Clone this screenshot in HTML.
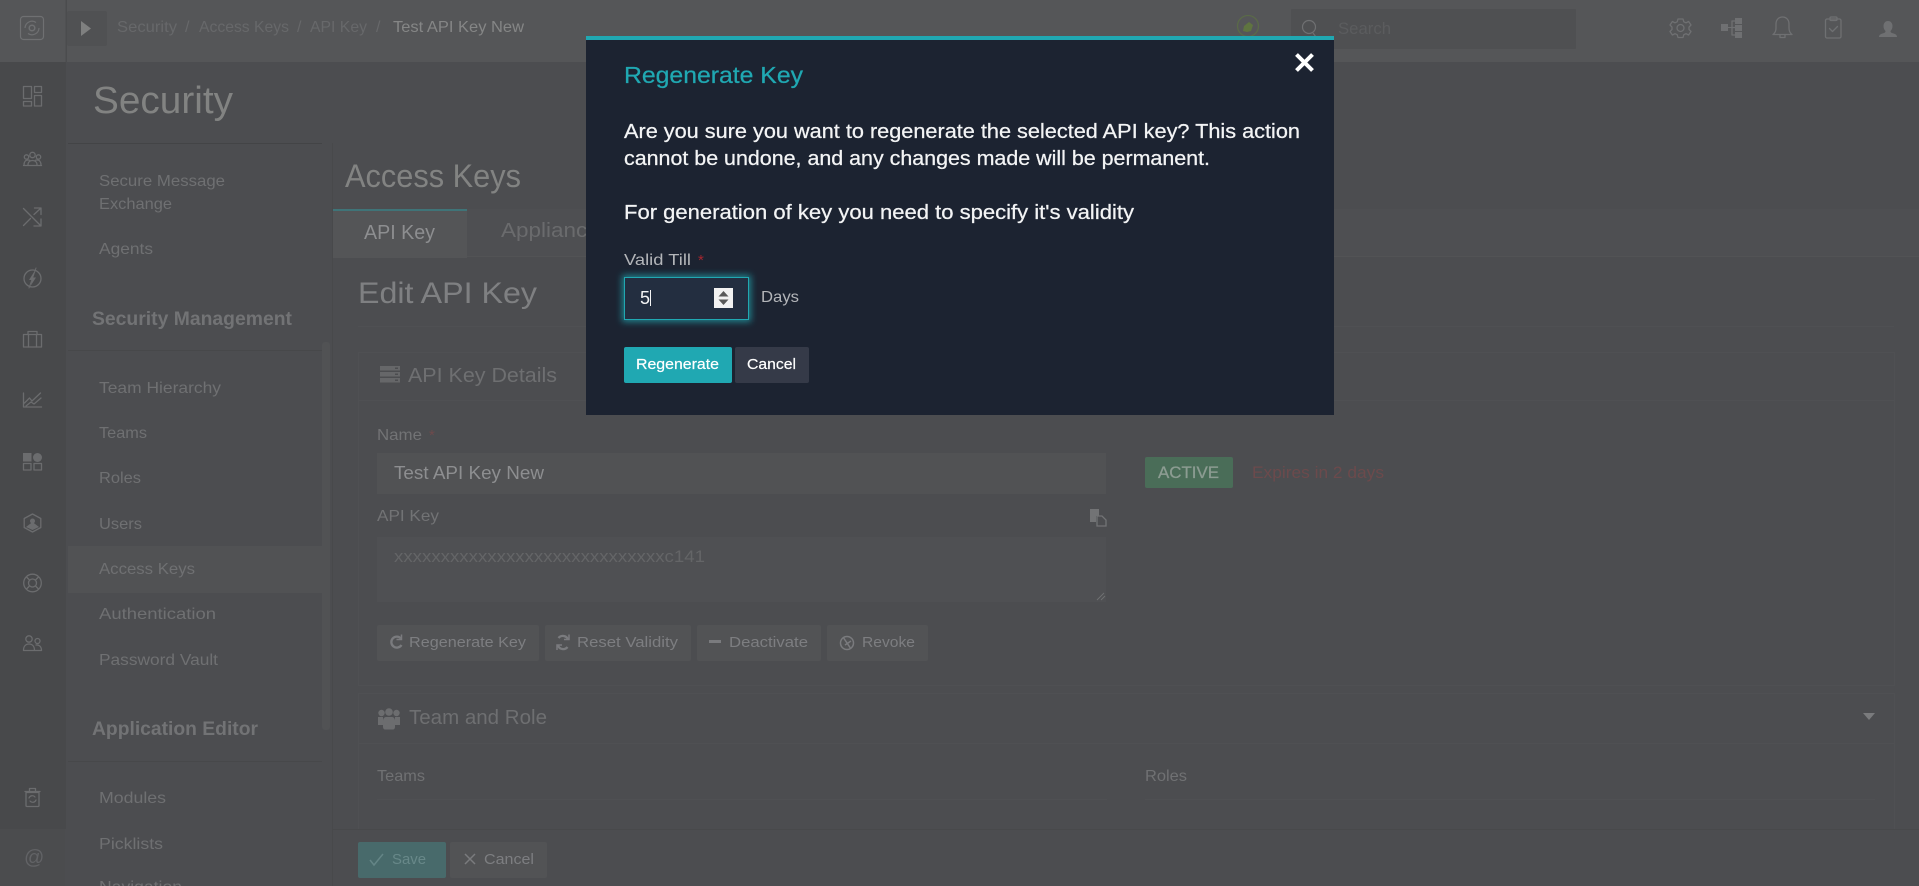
<!DOCTYPE html>
<html lang="en"><head><meta charset="utf-8"><title>Regenerate Key</title>
<style>
html,body{margin:0;padding:0;background:#4c4d50;width:1919px;height:886px;overflow:hidden}
svg{display:block}
text{font-family:"Liberation Sans",sans-serif;white-space:pre}
.ic{fill:none;stroke:#6b6c6e;stroke-width:1.300;stroke-linecap:round;stroke-linejoin:round}
.f{fill:#6b6c6e;stroke:none}
</style></head><body>
<svg xmlns="http://www.w3.org/2000/svg" width="1919" height="886" viewBox="0 0 1919 886">
<defs><filter id="glow" x="-30%" y="-50%" width="160%" height="200%"><feGaussianBlur stdDeviation="3.500"/></filter></defs>
<!-- base -->
<rect width="1919" height="886" fill="#4c4d50"/>
<rect x="0" y="0" width="1919" height="62" fill="#555658"/>
<rect x="0" y="62" width="66" height="767" fill="#48494b"/>
<rect x="0" y="829" width="65" height="57" fill="#4b4c4e"/>
<rect x="65.500" y="0" width="1.500" height="62" fill="#4b4c4e"/>
<rect x="67" y="11" width="40" height="35" rx="2" fill="#505153"/>
<path d="M81 21L91 28.500L81 36Z" fill="#7f8080"/>
<!-- logo -->
<rect x="20.500" y="16.500" width="23" height="23" rx="3" fill="none" stroke="#6f7072" stroke-width="1.200"/>
<path d="M25 28a7 7 0 0 1 11-5.500M39 28a7 7 0 0 1-11 5.500" fill="none" stroke="#6f7072" stroke-width="1.200"/>
<circle cx="32" cy="28" r="2.800" fill="none" stroke="#6f7072" stroke-width="1.500"/>
<!-- breadcrumb -->
<g font-size="16" fill="#67686a">
<text x="117" y="32" textLength="60" lengthAdjust="spacingAndGlyphs">Security</text>
<text x="185" y="32">/</text>
<text x="199" y="32" textLength="90" lengthAdjust="spacingAndGlyphs">Access Keys</text>
<text x="297" y="32">/</text>
<text x="310" y="32" textLength="57" lengthAdjust="spacingAndGlyphs">API Key</text>
<text x="376" y="32">/</text>
<text x="393" y="32" textLength="131" lengthAdjust="spacingAndGlyphs" fill="#858686">Test API Key New</text>
</g>
<!-- plug status -->
<circle cx="1248" cy="26" r="10.500" fill="none" stroke="#5a6a48" stroke-width="1.300"/>
<path d="M1243 31l1-5 5-4 4 3-2 6-4 1z" fill="#5f7440"/>
<!-- search -->
<rect x="1291" y="9" width="285" height="40" rx="1" fill="#4f5052"/>
<circle cx="1309" cy="27" r="6.500" fill="none" stroke="#6f7072" stroke-width="1.200"/>
<path d="M1313 33l3 4" stroke="#6f7072" stroke-width="1.200"/>
<text x="1338" y="34" font-size="17" fill="#5b5c5e" textLength="53" lengthAdjust="spacingAndGlyphs">Search</text>
<!-- top right icons -->
<g class="ic" style="stroke:#6f7072">
<path d="M1678 19h5l.8 2.800 2.200 1 2.600-1.300 2.400 3.500-2 2.100v2.300l2 2.100-2.400 3.500-2.600-1.300-2.200 1-.8 2.800h-5l-.8-2.800-2.200-1-2.600 1.300-2.400-3.500 2-2.100v-2.300l-2-2.100 2.400-3.500 2.600 1.300 2.200-1z"/>
<circle cx="1680.500" cy="28" r="3.500"/>
<path d="M1732 27.500h4M1732 21v14h4M1732 21h4"/>
<path d="M1782.500 17c-4 0-6.500 3-6.500 7v4c0 3-1 5-3 6.500h19c-2-1.500-3-3.500-3-6.500v-4c0-4-2.500-7-6.500-7zM1780 35v2.500h5V35"/>
<rect x="1825.500" y="19" width="15.500" height="19" rx="1.500"/>
<rect x="1830" y="17" width="7" height="3.500" rx="1"/>
<path d="M1829.500 28.500l3 3 5-5"/>
</g>
<g fill="#6f7072">
<rect x="1721" y="24" width="7" height="7"/><rect x="1735" y="18" width="7" height="6"/><rect x="1735" y="25" width="7" height="6"/><rect x="1735" y="32" width="7" height="6"/>
<path d="M1728 27.500h4" stroke="#6f7072"/>
<path d="M1888 21c-3 0-4.500 2.500-4.500 5 0 2.500 1 4 2 5 0 1.500-1 2-3 2.500-2 .6-3.500 1.500-3.500 3.500h18c0-2-1.500-3-3.500-3.500-2-.5-3-1-3-2.500 1-1 2-2.500 2-5 0-2.500-1.500-5-4.500-5z"/>
</g>
<!-- rail icons -->
<g class="ic">
<rect x="23.500" y="86.500" width="8" height="12"/><rect x="34.500" y="86.500" width="7" height="6"/><rect x="23.500" y="101.500" width="8" height="4.500"/><rect x="34.500" y="95.500" width="7" height="10.500"/>
<circle cx="32.500" cy="155" r="2.700"/><circle cx="26.500" cy="157" r="2.200"/><circle cx="38.500" cy="157" r="2.200"/><path d="M23.500 165.500h18M24 165c0-3 1.500-5 4-5 .8 0 1.500.2 2 .6M41 165c0-3-1.500-5-4-5-.8 0-1.500.2-2 .6M28 165c0-3 2-4.500 4.500-4.500S37 162 37 165"/>
<path d="M23.500 208.500l17 17M23.500 225.500l7-7M34 214.500l6.500-6M34.500 208h6.500v6.500M41 219v7h-7"/>
<circle cx="32.500" cy="278.500" r="8.500"/><path d="M36 268l-7 20" stroke-width="1"/><path class="f" d="M34 272l-5 8h3l-1.500 6 5.500-8.500h-3l2-5.500z"/>
<rect x="23.500" y="334.500" width="18" height="12.500"/><path d="M28 334.500v-3h9v3M28.500 334.500v12.500M36.500 334.500v12.500"/>
<path d="M23.500 393v14h18M24.500 403l5-5 2.500 3 8.500-8M26 406l5-4 3 2 7-6"/>
<rect class="f" x="23" y="453" width="8.500" height="8.500"/><circle class="f" cx="37.500" cy="457.500" r="4.500"/><rect x="23.500" y="463.500" width="7.500" height="6.500"/><rect x="34" y="463.500" width="7.500" height="6.500"/>
<path d="M32.500 514l8.300 4.500v9L32.500 532l-8.300-4.500v-9z"/><circle class="f" cx="32.500" cy="521" r="2.500"/><path class="f" d="M26 527l6.500-5 6.500 5-6.500 3z"/>
<circle cx="32.500" cy="583" r="8.800"/><circle cx="32.500" cy="583" r="4"/><path d="M26.500 577l3 3M38.500 577l-3 3M26.500 589l3-3M38.500 589l-3-3"/>
<circle cx="29" cy="639" r="3.200"/><circle cx="37.500" cy="641" r="2.500"/><path d="M23.500 650.500c0-4 2-6.500 5.500-6.500s5.500 2.500 5.500 6.500zM36 645c3-.5 5.500 1.500 5.500 5.500H35"/>
<path d="M26 792.500h13v13a1 1 0 0 1-1 1H27a1 1 0 0 1-1-1zM25 791.500h15M29.500 791.500V788.500h6v3"/><path d="M29 798a3.500 3.500 0 0 1 6-1M36 800a3.500 3.500 0 0 1-6 1" stroke-width="1.200"/>
</g>
<text x="24" y="864" font-size="20" fill="#626366">@</text>
<!-- page title -->
<text x="93" y="113" font-size="38" fill="#828382" textLength="140" lengthAdjust="spacingAndGlyphs">Security</text>
<rect x="68" y="143" width="254" height="1" fill="#434446"/>
<rect x="332" y="143" width="1" height="743" fill="#48494b"/>
<!-- side nav -->
<rect x="68" y="546" width="254" height="47" fill="#515254"/>
<rect x="322" y="342" width="8" height="388" rx="3" fill="#515254"/>
<rect x="68" y="350" width="254" height="1" fill="#47484a"/>
<rect x="68" y="761" width="254" height="1" fill="#47484a"/>
<g font-size="16" fill="#6f7072">
<text x="99" y="186" textLength="126" lengthAdjust="spacingAndGlyphs">Secure Message</text>
<text x="99" y="209" textLength="73" lengthAdjust="spacingAndGlyphs">Exchange</text>
<text x="99" y="254" textLength="54" lengthAdjust="spacingAndGlyphs">Agents</text>
<text x="99" y="393" textLength="122" lengthAdjust="spacingAndGlyphs">Team Hierarchy</text>
<text x="99" y="438" textLength="48" lengthAdjust="spacingAndGlyphs">Teams</text>
<text x="99" y="483" textLength="42" lengthAdjust="spacingAndGlyphs">Roles</text>
<text x="99" y="529" textLength="43" lengthAdjust="spacingAndGlyphs">Users</text>
<text x="99" y="574" textLength="96" lengthAdjust="spacingAndGlyphs">Access Keys</text>
<text x="99" y="619" textLength="117" lengthAdjust="spacingAndGlyphs">Authentication</text>
<text x="99" y="665" textLength="119" lengthAdjust="spacingAndGlyphs">Password Vault</text>
<text x="99" y="803" textLength="67" lengthAdjust="spacingAndGlyphs">Modules</text>
<text x="99" y="849" textLength="64" lengthAdjust="spacingAndGlyphs">Picklists</text>
<text x="99" y="892" textLength="83" lengthAdjust="spacingAndGlyphs">Navigation</text>
</g>
<g font-size="19" font-weight="700" fill="#727375">
<text x="92" y="325" textLength="200" lengthAdjust="spacingAndGlyphs">Security Management</text>
<text x="92" y="735" textLength="166" lengthAdjust="spacingAndGlyphs">Application Editor</text>
</g>
<!-- content heading -->
<text x="345" y="187" font-size="32" fill="#828382" textLength="176" lengthAdjust="spacingAndGlyphs">Access Keys</text>
<rect x="333" y="209" width="1586" height="47" fill="#4e4f52"/>
<rect x="333" y="256" width="1586" height="1" fill="#525355"/>
<rect x="333" y="209" width="134" height="49" fill="#545557"/>
<rect x="333" y="209" width="134" height="2" fill="#3f7478"/>
<text x="364" y="239" font-size="20" fill="#8d8e90" textLength="71" lengthAdjust="spacingAndGlyphs">API Key</text>
<text x="501" y="237" font-size="20" fill="#6a6b6d" textLength="110" lengthAdjust="spacingAndGlyphs">Appliances</text>
<text x="358" y="303" font-size="30" fill="#7f8082" textLength="179" lengthAdjust="spacingAndGlyphs">Edit API Key</text>
<!-- panels -->
<rect x="358" y="326" width="1536" height="1" fill="#4f5053"/>
<rect x="358.500" y="352.500" width="1536" height="333" fill="none" stroke="#4f5053"/>
<rect x="358" y="400" width="1536" height="1" fill="#4f5053"/>
<g fill="#666769"><rect x="380" y="366" width="20" height="4.500"/><rect x="380" y="372" width="20" height="4.500"/><rect x="380" y="378" width="20" height="4.500"/></g>
<g fill="#4c4d50"><rect x="395" y="367.500" width="3" height="1.500"/><rect x="395" y="373.500" width="3" height="1.500"/><rect x="395" y="379.500" width="3" height="1.500"/></g>
<text x="408" y="382" font-size="20" fill="#6e6f71" textLength="149" lengthAdjust="spacingAndGlyphs">API Key Details</text>
<text x="377" y="440" font-size="16" fill="#727375" textLength="45" lengthAdjust="spacingAndGlyphs">Name</text>
<text x="429" y="440" font-size="15" fill="#6e4a4c">*</text>
<rect x="377" y="453" width="729" height="41" fill="#515254"/>
<text x="394" y="479" font-size="18" fill="#8d8e90" textLength="150" lengthAdjust="spacingAndGlyphs">Test API Key New</text>
<text x="377" y="521" font-size="16" fill="#727375" textLength="62" lengthAdjust="spacingAndGlyphs">API Key</text>
<path d="M1090 509h9l0 7h-3v6h-6z" fill="#727375"/><path d="M1097 516h5l4 4v6h-9z" fill="#4c4d50" stroke="#727375" stroke-width="1.300"/>
<rect x="377" y="537" width="729" height="65" fill="#4f5053"/>
<text x="394" y="562" font-size="17" fill="#646567" textLength="311" lengthAdjust="spacingAndGlyphs">xxxxxxxxxxxxxxxxxxxxxxxxxxxxxc141</text>
<path d="M1097 600l7-7M1101 600l4-4" stroke="#6f7072" stroke-width="1"/>
<!-- action buttons -->
<g fill="#525355">
<rect x="377" y="625" width="162" height="36" rx="2"/><rect x="545" y="625" width="146" height="36" rx="2"/><rect x="697" y="625" width="124" height="36" rx="2"/><rect x="827" y="625" width="101" height="36" rx="2"/>
</g>
<g font-size="15" fill="#7d7e81">
<text x="409" y="647" textLength="117" lengthAdjust="spacingAndGlyphs">Regenerate Key</text>
<text x="577" y="647" textLength="101" lengthAdjust="spacingAndGlyphs">Reset Validity</text>
<text x="729" y="647" textLength="79" lengthAdjust="spacingAndGlyphs">Deactivate</text>
<text x="862" y="647" textLength="53" lengthAdjust="spacingAndGlyphs">Revoke</text>
</g>
<g fill="none" stroke="#7a7b7e" stroke-width="2.300">
<path d="M401 638.500a5.500 5.500 0 1 0 .5 6.500"/><path d="M401.500 634.500v5h-5" stroke-width="1.500"/>
<path d="M568 639.500a5.500 5.500 0 0 0-9.500-1.500M558 645.500a5.500 5.500 0 0 0 9.500 1.500"/><path d="M569 634.500v5h-5M557 650v-5h5" stroke-width="1.500"/>
<path d="M709 641.500h12" stroke-width="3"/>
<circle cx="847" cy="643" r="6.500" stroke-width="1.500"/><path d="M843 637l8 12M845 645l6-4" stroke-width="1.500"/>
</g>
<!-- badge -->
<rect x="1145" y="457" width="88" height="31" rx="2" fill="#4a6d58"/>
<text x="1158" y="478" font-size="17" fill="#8c9c92" stroke="#8c9c92" stroke-width=".3" textLength="61" lengthAdjust="spacingAndGlyphs">ACTIVE</text>
<text x="1252" y="478" font-size="17" fill="#6c4a4c" textLength="132" lengthAdjust="spacingAndGlyphs">Expires in 2 days</text>
<!-- team panel -->
<rect x="358.500" y="693.500" width="1536" height="136" fill="none" stroke="#4f5053"/>
<rect x="358" y="743" width="1536" height="1" fill="#4f5053"/>
<g fill="#6c6d6f"><circle cx="389" cy="712" r="3.800"/><circle cx="381.500" cy="713" r="3.200"/><circle cx="396.500" cy="713" r="3.200"/><path d="M378 717h5v8h-5zM395 717h5v8h-5z"/><path d="M383 727v-6c0-2 1-4 3-4h6c2 0 3 2 3 4v6c0 1.500-1 2.500-2 2.500h-8c-1 0-2-1-2-2.500z"/></g>
<text x="409" y="724" font-size="20" fill="#6e6f71" textLength="138" lengthAdjust="spacingAndGlyphs">Team and Role</text>
<path d="M1863 713h12l-6 7z" fill="#7a7b7d"/>
<text x="377" y="781" font-size="16" fill="#707173" textLength="48" lengthAdjust="spacingAndGlyphs">Teams</text>
<text x="1145" y="781" font-size="16" fill="#707173" textLength="42" lengthAdjust="spacingAndGlyphs">Roles</text>
<rect x="377" y="799" width="730" height="1" fill="#4f5053"/>
<rect x="1145" y="799" width="730" height="1" fill="#4f5053"/>
<!-- footer -->
<rect x="333" y="829" width="1586" height="1" fill="#48494b"/>
<rect x="358" y="842" width="88" height="36" rx="2" fill="#486a6b"/>
<path d="M370 860l4 5 9-11" fill="none" stroke="#648586" stroke-width="1.500"/>
<text x="392" y="864" font-size="15" fill="#688889" textLength="34" lengthAdjust="spacingAndGlyphs">Save</text>
<rect x="450" y="842" width="97" height="36" rx="2" fill="#525355"/>
<path d="M465 854l10 10M475 854l-10 10" fill="none" stroke="#7a7b7e" stroke-width="1.500"/>
<text x="484" y="864" font-size="15" fill="#7d7e81" textLength="50" lengthAdjust="spacingAndGlyphs">Cancel</text>
<!-- modal -->
<rect x="586" y="36" width="748" height="379" fill="#1c2331"/>
<rect x="586" y="36" width="748" height="4" fill="#20a8b2"/>
<path d="M1296.500 54.500l16 16M1312.500 54.500l-16 16" stroke="#fff" stroke-width="4" fill="none"/>
<text x="624" y="83" font-size="23" fill="#20a8b2" stroke="#20a8b2" stroke-width=".25" textLength="179" lengthAdjust="spacingAndGlyphs">Regenerate Key</text>
<g font-size="20" fill="#f3f4f5" stroke="#f3f4f5" stroke-width=".25">
<text x="624" y="138" textLength="676" lengthAdjust="spacingAndGlyphs">Are you sure you want to regenerate the selected API key? This action</text>
<text x="624" y="165" textLength="586" lengthAdjust="spacingAndGlyphs">cannot be undone, and any changes made will be permanent.</text>
<text x="624" y="219" textLength="510" lengthAdjust="spacingAndGlyphs">For generation of key you need to specify it's validity</text>
</g>
<text x="624" y="265" font-size="16" fill="#b3b5b9" textLength="67" lengthAdjust="spacingAndGlyphs">Valid Till</text>
<text x="698" y="265" font-size="15" fill="#a5262f">*</text>
<rect x="622" y="275" width="129" height="47" fill="#20a8b2" opacity=".7" filter="url(#glow)"/>
<rect x="624.500" y="277.500" width="124" height="42" fill="#232e40" stroke="#20a8b2"/>
<text x="640" y="304" font-size="18" fill="#f3f4f5">5</text>
<rect x="650" y="290" width="1" height="16" fill="#f3f4f5"/>
<rect x="714" y="288" width="19" height="20" fill="#f2f2f2"/>
<path d="M723.500 291l-5 5.500h10zM723.500 305l-5-5.500h10z" fill="#5a5a5a"/>
<text x="761" y="302" font-size="16" fill="#b3b5b9" textLength="38" lengthAdjust="spacingAndGlyphs">Days</text>
<rect x="624" y="347" width="108" height="36" rx="2" fill="#20a8b2"/>
<text x="636" y="369" font-size="15" fill="#fff" stroke="#fff" stroke-width=".2" textLength="83" lengthAdjust="spacingAndGlyphs">Regenerate</text>
<rect x="735" y="347" width="74" height="36" rx="2" fill="#353a48"/>
<text x="747" y="369" font-size="15" fill="#fff" stroke="#fff" stroke-width=".2" textLength="49" lengthAdjust="spacingAndGlyphs">Cancel</text>
</svg>
</body></html>
